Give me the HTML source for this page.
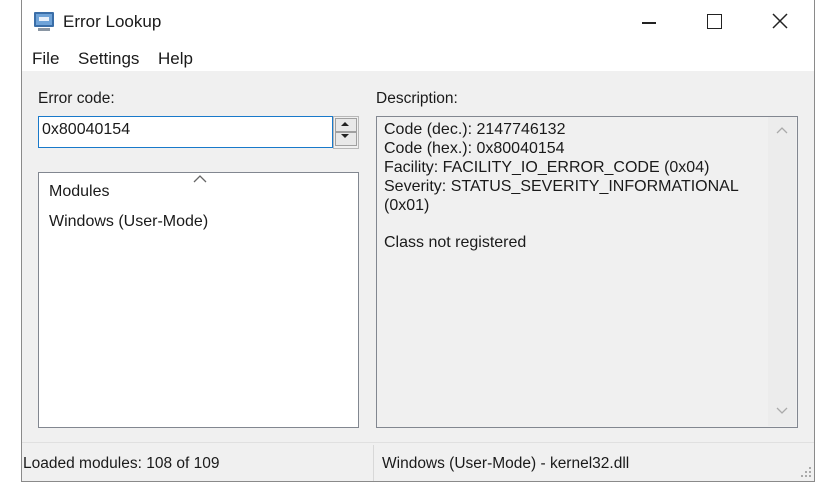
<!DOCTYPE html>
<html><head><style>
body{margin:0;width:836px;height:484px;background:#fff;position:relative;overflow:hidden;font-family:"Liberation Sans",sans-serif;font-size:16px;color:#1a1a1a}
.a{position:absolute}
</style></head><body>
<div class="a" style="left:21px;top:0;width:792px;height:481px;border:1px solid #8a8a8a;border-top:none;background:#fff"></div>
<div class="a" style="left:22px;top:71px;width:792px;height:410px;background:#f0f0f0"></div>
<svg class="a" style="left:33px;top:11px" width="22" height="22" viewBox="0 0 22 22"><rect x="1" y="1" width="20" height="15" rx="1" fill="#3a6ea8"/><rect x="3" y="3" width="16" height="11" fill="#6fa3d8"/><rect x="6" y="6" width="10" height="4" fill="#e8f0fa"/><rect x="5" y="17" width="12" height="3" fill="#8a96a3"/></svg>
<div class="a" style="left:63px;top:12px;font-size:17px">Error Lookup</div>
<div class="a" style="left:642px;top:22px;width:14px;height:1.5px;background:#222"></div>
<div class="a" style="left:707px;top:14px;width:13px;height:13px;border:1.5px solid #222"></div>
<svg class="a" style="left:772px;top:13px" width="16" height="16"><path d="M1 1L15 15M15 1L1 15" stroke="#222" stroke-width="1.5"/></svg>
<div class="a" style="left:32px;top:49px;font-size:17px">File</div>
<div class="a" style="left:78px;top:49px;font-size:17px">Settings</div>
<div class="a" style="left:158px;top:49px;font-size:17px">Help</div>
<div class="a" style="left:38px;top:90px;font-size:15.5px">Error code:</div>
<div class="a" style="left:38px;top:116px;width:293px;height:30px;border:1px solid #1979ca;background:#fff"></div>
<div class="a" style="left:42px;top:121px">0x80040154</div>
<div class="a" style="left:333px;top:116px;width:24px;height:31px;border:1px solid #b8b8b8;background:#f0f0f0"></div>
<div class="a" style="left:335px;top:118px;width:20px;height:12px;border:1px solid #a0a0a0;background:#e8e8e8"></div>
<div class="a" style="left:335px;top:132px;width:20px;height:12px;border:1px solid #a0a0a0;background:#e8e8e8"></div>
<svg class="a" style="left:340px;top:121px" width="10" height="22"><path d="M1 5L5 1L9 5Z M1 13L9 13L5 17Z" fill="#222"/></svg>
<div class="a" style="left:38px;top:172px;width:319px;height:254px;border:1px solid #828790;background:#fff"></div>
<svg class="a" style="left:193px;top:175px" width="14" height="8"><path d="M1 7L7 1L13 7" stroke="#666" fill="none" stroke-width="1.3"/></svg>
<div class="a" style="left:49px;top:183px">Modules</div>
<div class="a" style="left:49px;top:213px">Windows (User-Mode)</div>
<div class="a" style="left:376px;top:90px;font-size:15.5px">Description:</div>
<div class="a" style="left:376px;top:116px;width:420px;height:310px;border:1px solid #828790;background:#f0f0f0"></div>
<div class="a" style="left:768px;top:117px;width:28px;height:309px;background:#ececec"></div>
<svg class="a" style="left:776px;top:126px" width="12" height="8"><path d="M1 7L6 2L11 7" stroke="#aaa" fill="none" stroke-width="1.3"/></svg>
<svg class="a" style="left:776px;top:407px" width="12" height="8"><path d="M1 1L6 6L11 1" stroke="#aaa" fill="none" stroke-width="1.3"/></svg>
<div class="a" style="left:384px;top:120px;line-height:19px">Code (dec.): 2147746132<br>Code (hex.): 0x80040154<br>Facility: FACILITY_IO_ERROR_CODE (0x04)<br>Severity: STATUS_SEVERITY_INFORMATIONAL<br>(0x01)</div>
<div class="a" style="left:384px;top:234px">Class not registered</div>
<div class="a" style="left:22px;top:442px;width:792px;height:1px;background:#e0e0e0"></div>
<div class="a" style="left:373px;top:445px;width:1px;height:36px;background:#d8d8d8"></div>
<div class="a" style="left:23px;top:455px;font-size:15.5px">Loaded modules: 108 of 109</div>
<div class="a" style="left:382px;top:455px;font-size:15.5px">Windows (User-Mode) - kernel32.dll</div>
<svg class="a" style="left:800px;top:466px" width="12" height="12"><g fill="#aaa"><rect x="9" y="1" width="2" height="2"/><rect x="5" y="5" width="2" height="2"/><rect x="9" y="5" width="2" height="2"/><rect x="1" y="9" width="2" height="2"/><rect x="5" y="9" width="2" height="2"/><rect x="9" y="9" width="2" height="2"/></g></svg>
</body></html>
